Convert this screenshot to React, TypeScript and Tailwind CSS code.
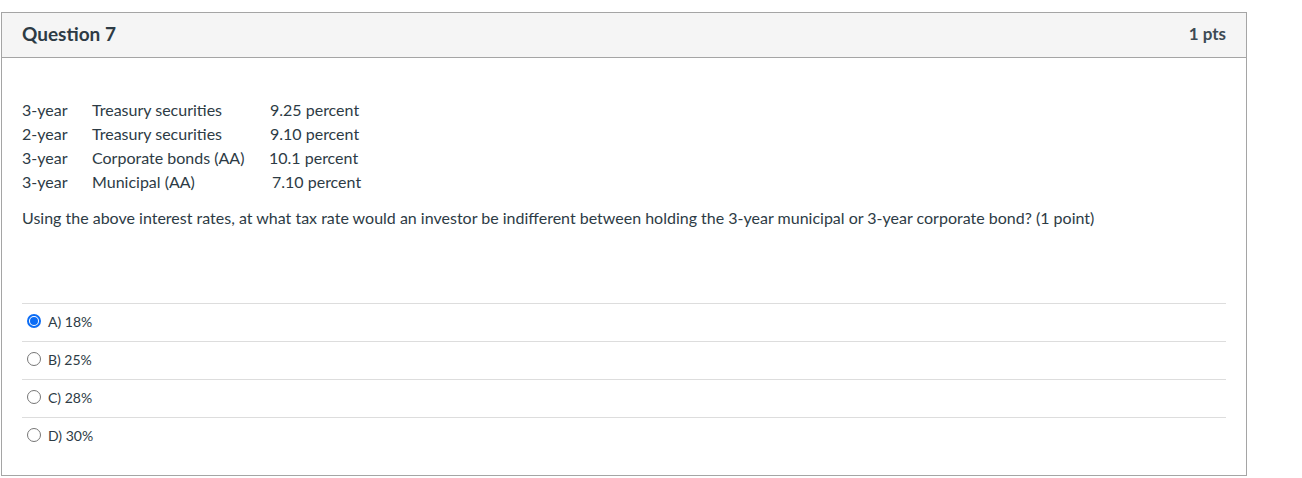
import React, { useState } from "react";

const rates = [
  { term: "3-year", name: "Treasury securities", value: "9.25 percent", pad: "pl-[2px]" },
  { term: "2-year", name: "Treasury securities", value: "9.10 percent", pad: "pl-[2px]" },
  { term: "3-year", name: "Corporate bonds (AA)", value: "10.1 percent", pad: "pl-[1px]" },
  { term: "3-year", name: "Municipal (AA)", value: "7.10 percent", pad: "pl-[4px]" },
];

const answers = ["A) 18%", "B) 25%", "C) 28%", "D) 30%"];

const Radio: React.FC<{ checked: boolean }> = ({ checked }) =>
  checked ? (
    <span className="flex h-[14px] w-[14px] items-center justify-center rounded-full border-2 border-[#0b6cf5] bg-white">
      <span className="h-[8px] w-[8px] rounded-full bg-[#0b6cf5]" />
    </span>
  ) : (
    <span className="h-[14px] w-[14px] rounded-full border border-[#767676] bg-white" />
  );

export default function App() {
  const [selected, setSelected] = useState(0);

  return (
    <div
      className="min-h-[478px] bg-white pt-[12px] pl-[1px] text-[#2d3b45]"
      style={{ fontFamily: "Lato, 'Open Sans', sans-serif" }}
    >
      <div className="w-[1246px] border border-[#a5a5a5]">
        <div className="flex h-[45px] items-center justify-between border-b border-[#a5a5a5] bg-[#f5f5f5] px-5 pb-[2px]">
          <h2 className="text-[19px] font-bold">Question 7</h2>
          <span className="text-[17px] font-bold text-[#3d4a54]">1 pts</span>
        </div>

        <div className="px-5 pt-[40px] pb-[20px]">
          <table className="text-[16px] leading-[24px]">
            <tbody>
              {rates.map((r, i) => (
                <tr key={i}>
                  <td className="w-[70px] p-0 align-top">{r.term}</td>
                  <td className="w-[176px] p-0 align-top">{r.name}</td>
                  <td className={`p-0 align-top ${r.pad}`}>{r.value}</td>
                </tr>
              ))}
            </tbody>
          </table>

          <p className="mt-[12px] text-[16px] leading-[24px]">
            Using the above interest rates, at what tax rate would an investor be indifferent between holding the
            3-year municipal or 3-year corporate bond? (1 point)
          </p>

          <div className="mt-[73px]">
            {answers.map((a, i) => (
              <label
                key={a}
                onClick={() => setSelected(i)}
                className="flex h-[38px] cursor-pointer items-center gap-[7px] border-t border-[#dddddd] pb-[3px] pl-[5px] text-[14px]"
              >
                <Radio checked={selected === i} />
                <span>{a}</span>
              </label>
            ))}
          </div>
        </div>
      </div>
    </div>
  );
}
